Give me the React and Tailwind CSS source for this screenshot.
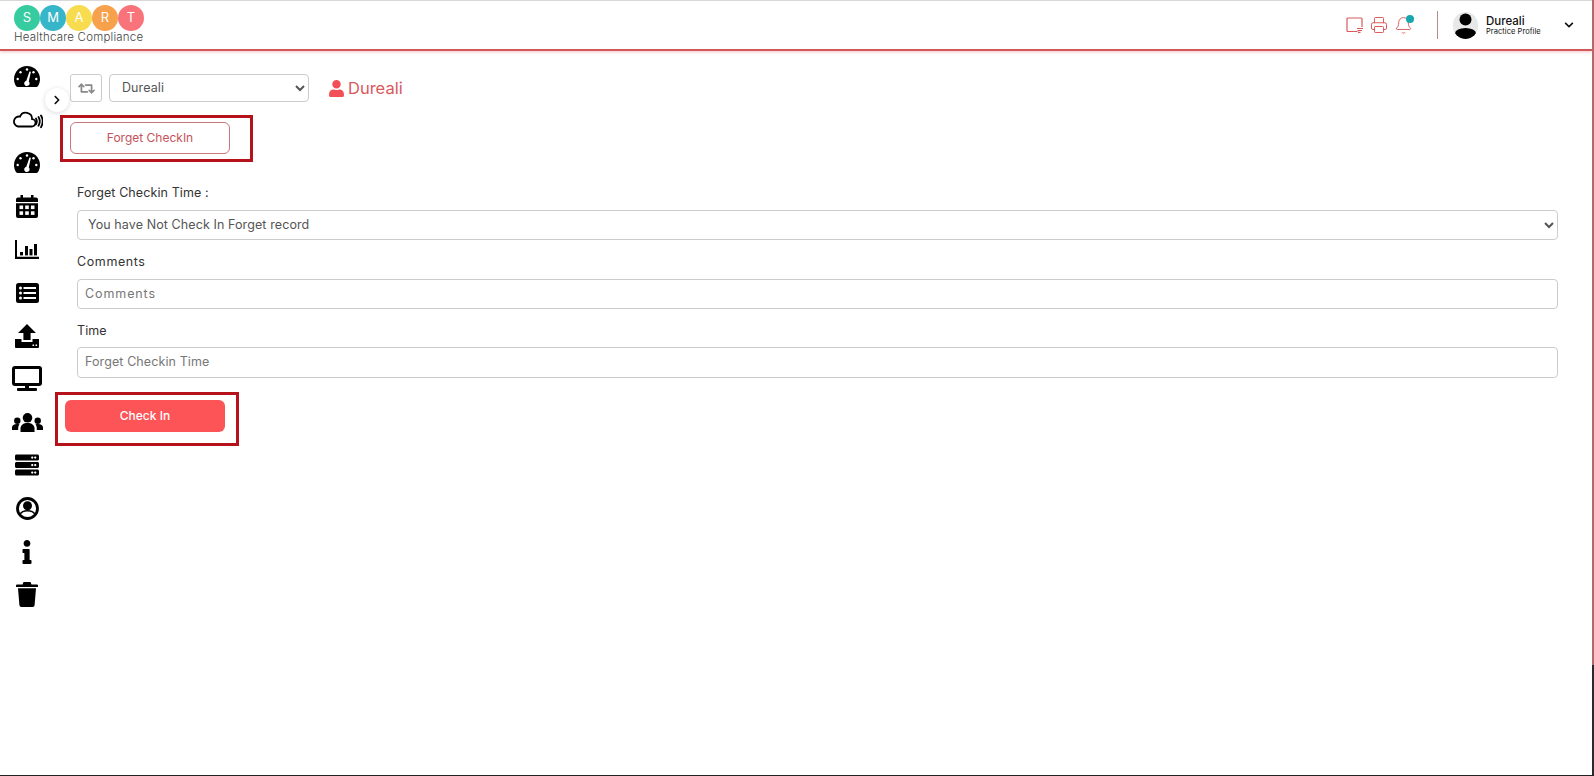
import React from "react";
import { FaServer, FaInfo, FaRetweet, FaUser, FaChevronDown, FaChevronRight } from "react-icons/fa";
import { Printer, Bell } from "lucide-react";

function Logo() {
  const letters = [["S", "bg-[#37cba0]"], ["M", "bg-[#36b6c8]"], ["A", "bg-[#f7dc4f]"], ["R", "bg-[#f7a14d]"], ["T", "bg-[#f9737a]"]];
  return (
    <div className="flex flex-col items-start">
      <div className="flex">
        {letters.map(([l, c]) => (
          <div key={l} className={`w-[26px] h-[26px] rounded-full flex items-center justify-center text-white text-[13px] font-normal ${c}`}>{l}</div>
        ))}
      </div>
      <div className="text-[11.5px] leading-[14px] font-light text-[#444] tracking-[0.2px] mt-[-1px]">Healthcare Compliance</div>
    </div>
  );
}

function Gauge() {
  return (
    <svg width="26" height="21" viewBox="0 0 26 21">
      <path d="M13 0C5.8 0 0 5.8 0 13c0 2.6.7 5 2 7 .4.6 1 1 1.7 1h18.6c.7 0 1.3-.4 1.7-1 1.3-2 2-4.4 2-7C26 5.8 20.2 0 13 0z" fill="#000" />
      <g fill="#fff">
        <circle cx="13" cy="3.5" r="1.2" />
        <circle cx="6.5" cy="6.3" r="1.2" />
        <circle cx="3.7" cy="13" r="1.2" />
        <circle cx="19.5" cy="6.3" r="1.2" />
        <circle cx="22.3" cy="13" r="1.2" />
        <path d="M15.5 5.5l1.4.3-2.100 9.600a2.700 2.700 0 1 1-2.500-.7z" />
      </g>
    </svg>
  );
}

function CloudWaves() {
  return (
    <svg width="31" height="19" viewBox="0 0 31 19" fill="none" stroke="#000" strokeWidth="1.8" strokeLinecap="round">
      <path d="M6 16.500h13.500a3.700 3.700 0 0 0 .6-7.400A6.300 6.300 0 0 0 8 6.600 5 5 0 0 0 6 16.500z" />
      <path d="M24 8.500c1 1.700 1 4 0 5.700M26.500 7c1.500 2.500 1.500 6.200 0 8.700M29 5.500c2 3.400 2 8.300 0 11.700" />
    </svg>
  );
}

function Calendar() {
  return (
    <svg width="22" height="23" viewBox="0 0 22 23">
      <path fill="#000" d="M4.500 0h2.500v2.500h8V0h2.500v2.500H20a2 2 0 0 1 2 2V7H0V4.500a2 2 0 0 1 2-2h2.500zM0 8.200h22V21a2 2 0 0 1-2 2H2a2 2 0 0 1-2-2z" />
      <g fill="#fff">
        <rect x="3.500" y="10.500" width="3.600" height="3.600" />
        <rect x="9.200" y="10.500" width="3.600" height="3.600" />
        <rect x="14.900" y="10.500" width="3.600" height="3.600" />
        <rect x="3.500" y="16.300" width="3.600" height="3.600" />
        <rect x="9.200" y="16.300" width="3.600" height="3.600" />
        <rect x="14.900" y="16.300" width="3.600" height="3.600" />
      </g>
    </svg>
  );
}

function Chart() {
  return (
    <svg width="24" height="19" viewBox="0 0 24 19" fill="#000">
      <path d="M0 0h2v16.800h22V19H0z" />
      <rect x="5" y="12" width="3" height="3.400" />
      <rect x="10" y="6" width="3" height="9.400" />
      <rect x="14.500" y="9" width="3" height="6.400" />
      <rect x="19" y="4" width="3" height="11.400" />
    </svg>
  );
}

function ListCard() {
  return (
    <svg width="23" height="20" viewBox="0 0 23 20">
      <rect width="23" height="20" rx="2.500" fill="#000" />
      <g fill="#fff">
        <circle cx="4.500" cy="5" r="1.500" />
        <circle cx="4.500" cy="10" r="1.500" />
        <circle cx="4.500" cy="15" r="1.500" />
        <rect x="7.500" y="4" width="12.500" height="2" />
        <rect x="7.500" y="9" width="12.500" height="2" />
        <rect x="7.500" y="14" width="12.500" height="2" />
      </g>
    </svg>
  );
}

function UploadTray() {
  return (
    <svg width="24" height="24" viewBox="0 0 24 24" fill="#000">
      <path d="M12 0l9 9h-5.400v7H8.400V9H3z" />
      <path fillRule="evenodd" d="M0 15h6.500v3h11v-3H24v8a1 1 0 0 1-1 1H1a1 1 0 0 1-1-1zM17.500 20.500h1.600v1.400h-1.600zM20.500 20.500h1.600v1.400h-1.600z" />
    </svg>
  );
}

function Desktop() {
  return (
    <svg width="30" height="25" viewBox="0 0 30 25">
      <rect x="1.500" y="1.500" width="27" height="17" rx="1.500" fill="none" stroke="#000" strokeWidth="3" />
      <rect x="13" y="19" width="4" height="3" fill="#000" />
      <rect x="5" y="22" width="20" height="3" rx="1" fill="#000" />
    </svg>
  );
}

function Users() {
  return (
    <svg width="31" height="19" viewBox="0 0 31 19" fill="#000">
      <circle cx="15.500" cy="4.800" r="4.800" />
      <path d="M8.500 19v-3.500c0-3.500 3-5.500 7-5.500s7 2 7 5.500V19z" />
      <circle cx="5.300" cy="7.800" r="3.200" />
      <circle cx="25.700" cy="7.800" r="3.200" />
      <path d="M0 17v-2.500c0-2.300 2-3.500 5-3.500 1 0 1.800.1 2.500.4-.9 1-1.300 2.400-1.300 4V17zM31 17v-2.500c0-2.300-2-3.500-5-3.500-1 0-1.800.1-2.500.4.900 1 1.300 2.400 1.300 4V17z" />
    </svg>
  );
}

function UserRing() {
  return (
    <svg width="23" height="23" viewBox="0 0 23 23">
      <circle cx="11.500" cy="11.500" r="10" fill="none" stroke="#000" strokeWidth="2.800" />
      <circle cx="11.500" cy="8.800" r="4.500" fill="#000" />
      <path d="M3.800 17.500c1.500-2.500 4.200-3.700 7.700-3.700s6.200 1.200 7.700 3.700" fill="none" stroke="#000" strokeWidth="1.400" />
    </svg>
  );
}

function Trash() {
  return (
    <svg width="22" height="25" viewBox="0 0 22 25" fill="#000">
      <path d="M7.500 0h7l1 2.500H21a1 1 0 0 1 1 1V5H0V3.500a1 1 0 0 1 1-1h5.500z" />
      <path d="M2 6.200h18L18.600 23a2 2 0 0 1-2 2H5.400a2 2 0 0 1-2-2z" />
    </svg>
  );
}

function Note() {
  return (
    <svg width="18" height="16" viewBox="0 0 18 16" fill="none" stroke="#d9595c" strokeWidth="1.200">
      <path d="M11.500 14.500H2a1 1 0 0 1-1-1V2a1 1 0 0 1 1-1h13a1 1 0 0 1 1 1v8" />
      <path d="M11 11.500h6M11.500 13.500h4.500M12 15.300h2.500" />
    </svg>
  );
}

function Avatar() {
  return (
    <svg width="25" height="27" viewBox="0 0 25 27" className="rounded-full bg-[#e8e8e8]">
      <circle cx="12.500" cy="7.500" r="6" fill="#000" />
      <ellipse cx="12.500" cy="21.500" rx="10.500" ry="5.500" fill="#000" />
    </svg>
  );
}

const sideIcons = [
  <Gauge />,
  <CloudWaves />,
  <Gauge />,
  <Calendar />,
  <Chart />,
  <ListCard />,
  <UploadTray />,
  <Desktop />,
  <Users />,
  <FaServer size={24} />,
  <UserRing />,
  <FaInfo size={24} />,
  <Trash />,
];

function Field({ label, labelClass = "tracking-[0.1px]", gapClass = "mb-[9px]", children }) {
  return (
    <div className="flex flex-col">
      <label className={`text-[12.5px] leading-[16px] text-[#333] ${gapClass} ${labelClass}`}>{label}</label>
      {children}
    </div>
  );
}

const fieldBox = "w-full border border-[#ccc] rounded-[4px] bg-white text-[12.5px] text-[#555] outline-none";

export default function App() {
  return (
    <div className="w-[1594px] h-[776px] flex flex-col overflow-hidden bg-white" style={{ fontFamily: '"Inter", "Liberation Sans", sans-serif' }}>
      <div className="flex flex-1 min-h-0">
        <div className="flex-1 min-w-0 flex flex-col">
          {/* Header */}
          <header className="h-[51px] shrink-0 border-t border-t-[#d8d8d8] border-b-2 border-b-[#d2595b] bg-white flex items-center justify-between pl-[14px] pr-[18px] shadow-[0_1px_3px_rgba(217,89,92,0.35)] relative">
            <div className="mt-[-1px]"><Logo /></div>
            <div className="flex items-center">
              <div className="flex items-center gap-[6px] text-[#d9595c]">
                <Note />
                <Printer size={18} strokeWidth={1.3} />
                <div className="relative">
                  <Bell size={19} strokeWidth={1.2} />
                  <span className="absolute top-[-1px] right-[-1px] w-[8px] h-[8px] rounded-full bg-[#15a7ab]" />
                </div>
              </div>
              <div className="w-px h-[28px] bg-[#b98a8a] ml-[24px] mr-[15px]" />
              <Avatar />
              <div className="ml-[8px] flex flex-col w-[60px]">
                <span className="text-[11.5px] leading-[12px] font-medium text-[#111]">Dureali</span>
                <span className="text-[7.5px] leading-[9px] text-[#111] tracking-[0.05px]">Practice Profile</span>
              </div>
              <FaChevronDown size={10} className="text-[#111] ml-[18px]" />
            </div>
          </header>

          <div className="flex flex-1 min-h-0 relative">
            {/* Sidebar */}
            <aside className="w-[55px] shrink-0 flex flex-col items-center pt-[4px] pr-[1px]">
              {sideIcons.map((ic, i) => (
                <div key={i} className="h-[43.2px] w-full flex items-center justify-center text-black">{ic}</div>
              ))}
            </aside>
            <button className="absolute left-[45px] top-[37px] w-[24px] h-[24px] rounded-full bg-white shadow-[0_1px_5px_rgba(0,0,0,0.15)] flex items-center justify-center">
              <FaChevronRight size={10} className="text-[#111]" />
            </button>

            {/* Main */}
            <main className="flex-1 min-w-0 flex flex-col pr-[34px]">
              <div className="flex items-center pl-[15px] pt-[23px]">
                <button className="w-[32px] h-[28px] border border-[#ccc] rounded-[3px] flex items-center justify-center text-[#888]">
                  <FaRetweet size={17} />
                </button>
                <select className="ml-[7px] w-[200px] h-[28px] border border-[#ccc] rounded-[4px] bg-white pl-[8px] pb-[2px] text-[12.5px] tracking-[0.1px] text-[#555] outline-none">
                  <option>Dureali</option>
                </select>
                <FaUser size={17} className="ml-[19px] text-[#f05056]" />
                <span className="ml-[3px] mt-[1px] text-[16.5px] text-[#d9595c]">Dureali</span>
              </div>

              <div className="ml-[5px] mt-[13px] w-[193px] h-[47px] border-[3px] border-[#b5121b] flex items-start pt-[4px] pl-[7px]">
                <button className="w-[160px] h-[32px] border border-[#c9777a] rounded-[6px] text-[12px] text-[#c4525a]">Forget CheckIn</button>
              </div>

              <div className="ml-[22px] mt-[23px] flex flex-col gap-[14px]">
                <Field label="Forget Checkin Time :">
                  <select className={`${fieldBox} tracking-[0.1px] h-[30px] pl-[6px] pb-[2px]`}>
                    <option>You have Not Check In Forget record</option>
                  </select>
                </Field>
                <Field label="Comments" labelClass="tracking-[0.6px]">
                  <input className={`${fieldBox} tracking-[0.9px] h-[30px] px-[7px] pb-[2px] placeholder:text-[#777]`} placeholder="Comments" />
                </Field>
                <Field label="Time" gapClass="mb-[8px]">
                  <input className={`${fieldBox} tracking-[0.1px] h-[31px] px-[7px] pb-[2px] placeholder:text-[#777]`} placeholder="Forget Checkin Time" />
                </Field>
              </div>

              <div className="mt-[14px] w-[184px] h-[54px] border-[3px] border-[#b5121b] flex items-start pt-[5px] pl-[7px]">
                <button className="w-[160px] h-[32px] rounded-[6px] bg-[#fd5458] text-white text-[12px] font-medium">Check In</button>
              </div>
            </main>
          </div>
        </div>
        {/* Right edge */}
        <div className="w-[2px] shrink-0 flex flex-col">
          <div className="h-[665px] bg-[#b46a6a]" />
          <div className="flex-1 bg-[#2b2b2b]" />
        </div>
      </div>
      <div className="h-[1px] shrink-0 bg-[#222]" />
    </div>
  );
}
